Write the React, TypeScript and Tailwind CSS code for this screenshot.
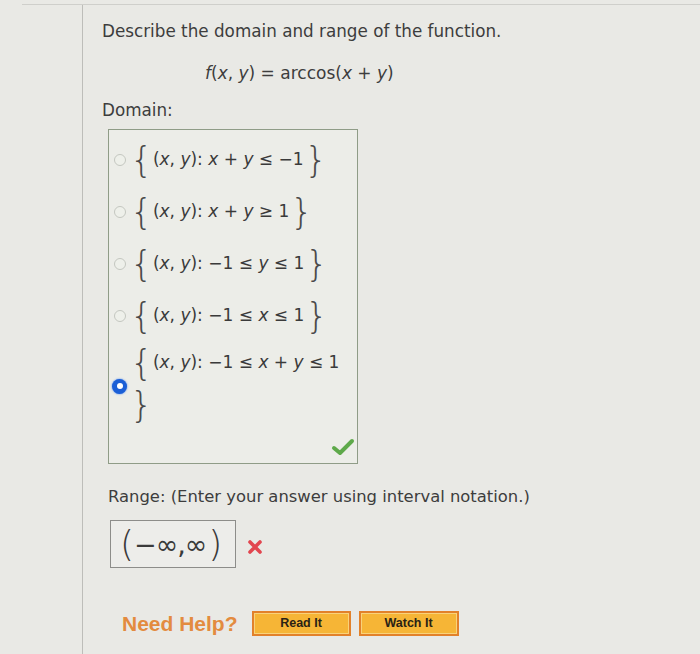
import React from "react";

const Brace = ({ side }: { side: "l" | "r" }) => (
  <span
    className="inline-block text-[36px] leading-[36px] text-[#4a4a4a] font-extralight"
    style={{ fontFamily: '"DejaVu Sans", sans-serif' }}
  >
    {side === "l" ? "{" : "}"}
  </span>
);

const I = ({ children }: { children: React.ReactNode }) => <i className="italic">{children}</i>;

const Radio = ({ checked }: { checked?: boolean }) =>
  checked ? (
    <span className="inline-flex w-[15px] h-[15px] rounded-full bg-[#1b5fd6] shadow-[0_0_2px_#3b7df0] items-center justify-center">
      <span className="w-[6px] h-[6px] rounded-full bg-white" />
    </span>
  ) : (
    <span className="inline-block w-[12px] h-[12px] rounded-full border border-[#c4c7c0] bg-[#eef0ea]" />
  );

const SetRow = ({ children }: { children: React.ReactNode }) => (
  <div className="flex items-center h-[52px]">
    <div className="w-[21px] flex justify-center">
      <Radio />
    </div>
    <div className="flex items-center text-[17px] text-[#3a3a3a]">
      <Brace side="l" />
      <span className="mr-[1px]">{children}</span>
      <Brace side="r" />
    </div>
  </div>
);

export default function App() {
  return (
    <div
      className="w-[700px] h-[654px] bg-[#e9e9e5] overflow-hidden text-[#3b3b3b]"
      style={{ fontFamily: '"DejaVu Sans", Verdana, sans-serif' }}
    >
      <div className="pt-[4px] pl-[22px] h-full">
        <div className="border-t border-[#cfcfcb] h-full flex">
          <div className="w-[60px] shrink-0" />
          <div className="border-l border-[#bdbdb9] flex-1 pl-[19px] pt-[16px]">
            <div className="text-[16.8px] leading-[20px] text-[#3d3d3d]">
              Describe the domain and range of the function.
            </div>
            <div className="mt-[22px] pl-[103px] text-[17px] leading-[20px] text-[#3d3d3d]">
              <I>f</I>(<I>x</I>, <I>y</I>) = arccos(<I>x</I> + <I>y</I>)
            </div>
            <div className="mt-[17px] text-[16.8px] leading-[20px] text-[#3d3d3d]">Domain:</div>
            <div className="mt-[9px] ml-[6px] w-[250px] h-[335px] border-[1.5px] border-[#8f9c87] bg-[#ecede8] relative">
              <div className="pt-[4px]">
                <SetRow>
                  (<I>x</I>, <I>y</I>): <I>x</I> + <I>y</I> ≤ −1
                </SetRow>
                <SetRow>
                  (<I>x</I>, <I>y</I>): <I>x</I> + <I>y</I> ≥ 1
                </SetRow>
                <SetRow>
                  (<I>x</I>, <I>y</I>): −1 ≤ <I>y</I> ≤ 1
                </SetRow>
                <SetRow>
                  (<I>x</I>, <I>y</I>): −1 ≤ <I>x</I> ≤ 1
                </SetRow>
                <div className="flex items-center">
                  <div className="w-[21px] flex justify-center pt-[4px]">
                    <Radio checked />
                  </div>
                  <div className="text-[17px] text-[#3a3a3a]">
                    <div className="flex items-center h-[42px]">
                      <Brace side="l" />
                      <span>
                        (<I>x</I>, <I>y</I>): −1 ≤ <I>x</I> + <I>y</I> ≤ 1
                      </span>
                    </div>
                    <div className="flex items-center h-[42px]">
                      <Brace side="r" />
                    </div>
                  </div>
                </div>
              </div>
              <svg
                className="absolute right-[2px] bottom-[7px]"
                width="24"
                height="18"
                viewBox="0 0 24 18"
              >
                <path
                  d="M3 10 L9 15 L21 3"
                  fill="none"
                  stroke="#5ea94a"
                  strokeWidth="4"
                  strokeLinecap="round"
                  strokeLinejoin="round"
                />
              </svg>
            </div>
            <div className="mt-[23px] ml-[6px] text-[16.4px] leading-[20px] text-[#3d3d3d]">
              Range: (Enter your answer using interval notation.)
            </div>
            <div className="mt-[13px] ml-[8px] flex items-center">
              <div className="w-[126px] h-[48px] border border-[#8d8d8a] bg-[#ededea] flex items-center pl-[9px] text-[#3a3a3a]">
                <span className="text-[36px] leading-[40px] font-extralight">(</span>
                <span className="text-[27px] leading-none tracking-[-1px]">−∞,∞</span>
                <span className="text-[36px] leading-[40px] font-extralight ml-[2px]">)</span>
              </div>
              <svg className="ml-[11px] mt-[6px]" width="16" height="16" viewBox="0 0 16 16">
                <path
                  d="M3 3 L13 13 M13 3 L3 13"
                  stroke="#e2464f"
                  strokeWidth="3.6"
                  strokeLinecap="round"
                />
              </svg>
            </div>
            <div className="mt-[40px] ml-[20px] flex items-center">
              <span
                className="text-[21px] font-bold text-[#e38b3f] mr-[14px]"
                style={{ fontFamily: '"Liberation Sans", Arial, sans-serif' }}
              >
                Need Help?
              </span>
              <button
                className="w-[99px] h-[25px] bg-[#f6b536] border-[2px] border-[#e2812a] shadow-[inset_0_0_0_1px_#f9d27a] text-[12.5px] font-bold text-[#2a2215]"
                style={{ fontFamily: '"Liberation Sans", Arial, sans-serif' }}
              >
                Read It
              </button>
              <button
                className="ml-[8px] w-[100px] h-[25px] bg-[#f6b536] border-[2px] border-[#e2812a] shadow-[inset_0_0_0_1px_#f9d27a] text-[12.5px] font-bold text-[#2a2215]"
                style={{ fontFamily: '"Liberation Sans", Arial, sans-serif' }}
              >
                Watch It
              </button>
            </div>
          </div>
        </div>
      </div>
    </div>
  );
}
